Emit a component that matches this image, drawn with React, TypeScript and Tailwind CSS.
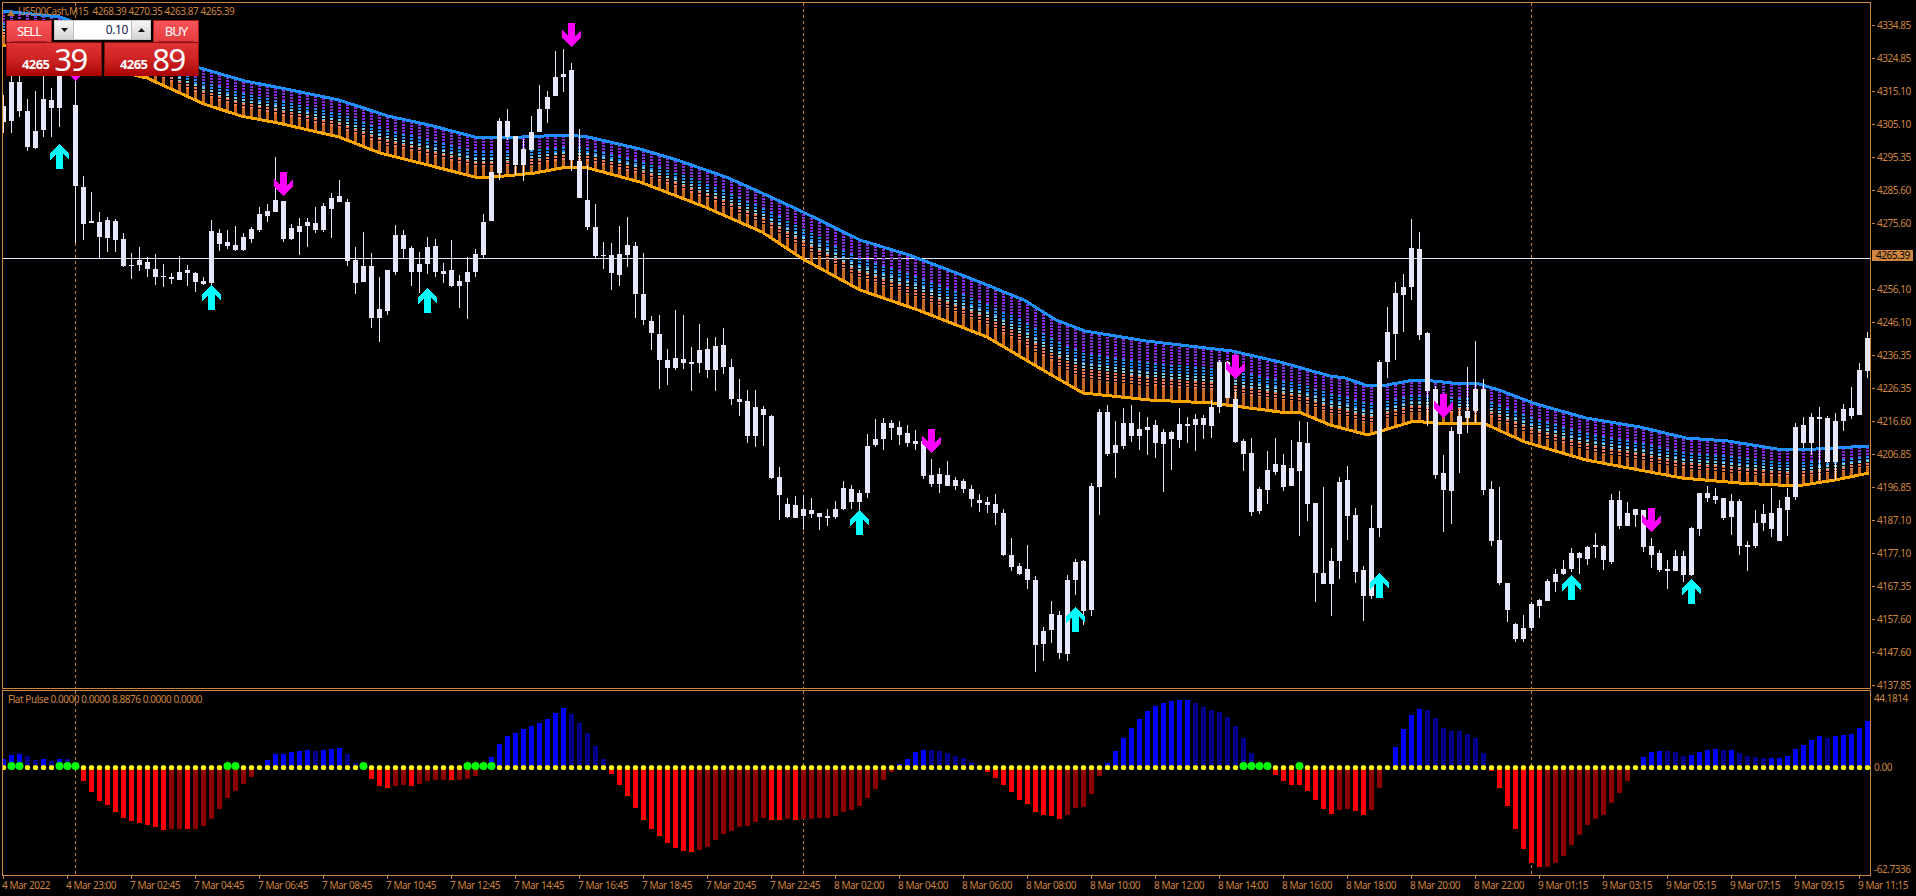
import React from 'react';

// hi, body top, body bottom, lo (page pixels)
const candles: number[][] = [
  [95,106,122,133],[60,82,121,133],[60,82,111,117],[99,111,147,151],[91,131,148,149],[60,99,130,137],[88,100,108,137],[50,60,108,127],[40,45,60,70],[76,105,186,243],
  [176,187,224,240],[192,221,223,223],[212,222,237,258],[217,220,238,252],[219,221,240,252],[233,239,266,267],[253,265,266,279],[247,260,265,271],[257,262,269,277],[254,269,277,285],
  [264,276,277,287],[273,277,279,284],[256,272,280,280],[265,270,273,286],[272,273,282,292],[277,281,284,285],[220,231,283,285],[229,233,244,251],[230,242,246,249],[226,245,250,251],
  [233,237,250,251],[227,229,239,243],[207,214,230,232],[204,211,216,222],[157,200,212,212],[201,201,239,242],[224,228,239,240],[218,226,232,255],[218,222,226,247],[207,223,230,233],
  [203,206,230,232],[193,198,209,238],[180,196,202,202],[199,202,261,266],[247,260,283,294],[232,266,282,282],[253,266,318,328],[277,309,318,342],[270,270,311,315],[225,235,272,275],
  [230,235,249,258],[246,248,272,286],[252,264,272,293],[237,247,264,274],[239,246,272,277],[263,271,274,283],[240,270,286,287],[275,281,286,308],[257,272,282,319],[249,254,272,277],
  [214,222,255,258],[172,172,221,221],[118,121,173,180],[109,121,137,140],[136,136,165,175],[139,149,165,181],[116,132,150,151],[85,109,132,132],[91,97,109,123],[51,77,96,96],
  [49,74,77,92],[63,70,160,171],[129,161,198,198],[165,200,227,230],[204,227,256,258],[242,255,256,269],[243,255,273,290],[226,254,275,286],[217,245,255,267],[242,246,294,318],
  [253,294,320,325],[316,321,333,350],[315,334,360,389],[349,360,368,385],[310,358,368,370],[315,359,363,369],[347,362,364,391],[324,350,363,373],[338,349,370,378],[337,346,370,391],
  [328,345,367,374],[359,367,399,405],[379,399,402,416],[390,401,436,443],[390,407,436,447],[406,409,415,446],[415,416,478,479],[467,477,495,520],[498,504,517,518],[496,505,518,518],
  [495,509,516,530],[498,510,514,518],[513,513,517,530],[509,516,518,526],[501,509,517,519],[481,488,509,510],[485,489,502,509],[490,493,502,510],[434,446,493,498],[419,439,445,447],
  [418,423,439,450],[420,423,428,440],[421,427,435,445],[425,433,443,447],[430,441,444,450],[440,441,476,479],[459,475,484,487],[468,474,484,493],[461,475,486,486],[477,480,486,490],
  [479,481,489,493],[485,489,499,507],[494,500,503,512],[497,502,505,513],[494,504,513,525],[509,513,555,556],[538,555,567,571],[563,566,574,575],[545,569,580,589],[576,580,645,672],
  [627,631,644,661],[601,614,630,643],[611,615,653,659],[575,580,654,661],[559,562,580,595],[560,561,611,625],[483,486,610,616],[409,412,487,515],[405,412,454,456],[421,445,453,478],
  [408,423,446,449],[405,423,436,442],[412,429,436,450],[417,427,430,455],[420,425,443,458],[429,432,444,492],[431,432,439,470],[408,424,440,448],[417,424,426,443],[414,419,425,451],
  [415,418,425,439],[400,407,426,438],[360,362,407,413],[361,362,398,398],[390,399,442,443],[439,441,454,471],[438,453,512,516],[487,489,511,514],[451,470,490,504],[438,464,472,475],
  [454,465,487,491],[440,468,486,486],[421,442,471,536],[422,443,504,521],[503,503,573,602],[487,573,584,584],[548,561,584,616],[477,482,561,579],[466,480,516,540],[508,515,572,583],
  [566,570,596,621],[505,528,596,599],[360,362,528,537],[307,332,362,378],[282,293,334,360],[274,287,295,332],[219,248,287,300],[232,249,335,340],[332,333,391,426],[386,389,475,479],
  [455,473,490,532],[427,431,491,524],[410,416,434,473],[367,411,418,433],[341,389,411,423],[379,389,490,495],[481,489,541,546],[487,540,583,585],[583,583,610,622],[623,624,639,642],
  [615,628,639,642],[602,604,628,631],[599,600,606,618],[579,581,601,601],[569,574,582,592],[560,569,574,575],[548,553,569,572],[552,553,558,574],[546,547,559,565],[533,545,547,558],
  [545,546,560,570],[494,500,562,564],[491,500,526,529],[502,513,526,526],[509,509,515,527],[510,510,547,552],[538,546,555,568],[550,553,570,572],[560,569,571,589],[550,556,571,571],
  [551,556,575,582],[527,528,575,576],[493,493,529,536],[486,493,498,502],[488,496,500,504],[498,498,518,520],[494,501,517,535],[499,501,546,555],[541,545,547,571],[510,523,546,548],
  [504,514,523,531],[488,513,529,537],[500,508,541,541],[488,497,510,536],[423,427,497,500],[417,425,443,448],[413,417,443,455],[407,417,419,480],[416,418,462,463],[413,421,462,480],
  [404,409,421,431],[387,408,416,419],[363,370,415,415],[332,338,371,378],
];

const bandTop: number[][] = [
  [3,11],[60,17],[200,68],[245,81],[286,89],[339,100],[388,116],[429,125],[475,137],[522,137],[567,135],[588,137],[640,149],[677,160],[726,177],[762,193],[803,212],[860,240],[909,255],[967,277],[1024,300],[1056,320],[1085,331],[1146,341],[1232,351],[1280,362],[1330,376],[1345,378],[1368,386],[1387,385],[1414,380],[1433,381],[1452,383],[1479,384],[1502,391],[1533,403],[1586,418],[1640,427],[1686,438],[1728,441],[1777,449],[1816,449],[1869,446],
];
const bandBottom: number[][] = [
  [3,45],[147,78],[204,104],[241,116],[278,123],[339,137],[380,153],[416,162],[475,177],[494,177],[535,173],[567,167],[588,168],[640,182],[705,207],[762,232],[803,259],[860,290],[918,310],[987,337],[1048,373],[1083,393],[1150,400],[1211,403],[1280,412],[1299,412],[1330,425],[1368,435],[1414,421],[1433,423],[1483,423],[1525,442],[1586,460],[1682,478],[1739,483],[1797,486],[1835,480],[1869,473],
];

const pulse = [
  8,12,13,11,7,8,6,8,8,0,-14,-25,-34,-38,-45,-51,-54,-56,-58,-60,
  -63,-62,-62,-62,-62,-59,-52,-42,-31,-24,-17,-10,0,7,13,13,15,16,17,16,
  17,18,19,13,4,0,-12,-19,-21,-19,-18,-19,-17,-14,-13,-13,-13,-13,-12,-9,
  0,10,23,31,34,38,41,44,48,54,59,53,44,34,21,8,-7,-18,-29,-41,
  -53,-62,-69,-76,-81,-84,-85,-83,-80,-73,-67,-64,-60,-59,-55,-51,-53,-53,-52,-53,
  -52,-52,-51,-51,-49,-45,-43,-39,-31,-22,-13,-5,3,8,15,17,17,16,14,11,
  9,5,0,-5,-11,-18,-25,-33,-37,-45,-48,-49,-52,-48,-41,-40,-27,-9,4,16,
  29,39,48,56,61,64,66,67,67,64,60,57,55,50,41,29,14,0,0,-8,
  -14,-18,-18,-24,-33,-42,-47,-43,-42,-44,-48,-43,-21,0,20,38,52,58,57,49,
  39,36,36,33,29,14,-4,-21,-39,-62,-82,-96,-100,-100,-96,-89,-78,-68,-58,-52,
  -48,-36,-26,-14,0,10,15,16,16,15,11,12,15,17,18,17,17,14,11,10,
  9,9,9,11,18,22,27,31,29,31,32,33,39,46,
];
// stretches drawn in the darker shade
const dimRanges = [[3,4],[6,6],[8,8],[21,22],[24,31],[39,39],[43,44],[49,50],[52,55],[57,59],[71,75],[87,95],[98,98],[100,111],[116,121],[133,137],[149,156],[167,168],[171,172],[178,185],[193,203],[208,210],[215,215],[217,220],[228,228]];
const greenDots = [1,2,7,8,9,28,29,45,58,59,60,61,155,156,157,158,162];

const prices = ['4334.85','4324.85','4315.10','4305.10','4295.35','4285.60','4275.60','','4256.10','4246.10','4236.35','4226.35','4216.60','4206.85','4196.85','4187.10','4177.10','4167.35','4157.60','4147.60','4137.85'];
const times = ['4 Mar 2022','4 Mar 23:00','7 Mar 02:45','7 Mar 04:45','7 Mar 06:45','7 Mar 08:45','7 Mar 10:45','7 Mar 12:45','7 Mar 14:45','7 Mar 16:45','7 Mar 18:45','7 Mar 20:45','7 Mar 22:45','8 Mar 02:00','8 Mar 04:00','8 Mar 06:00','8 Mar 08:00','8 Mar 10:00','8 Mar 12:00','8 Mar 14:00','8 Mar 16:00','8 Mar 18:00','8 Mar 20:00','8 Mar 22:00','9 Mar 01:15','9 Mar 03:15','9 Mar 05:15','9 Mar 07:15','9 Mar 09:15','9 Mar 11:15'];

const upArrows = [[59,144],[211,285],[427,288],[859,510],[1075,607],[1379,573],[1571,575],[1691,579]];
const downArrows = [[75,57],[571,23],[283,172],[931,429],[1235,355],[1443,394],[1651,508]];
const sessions = [75, 803, 1531];

const barX = (k: number) => 3 + 8 * k;
const lerp = (pts: number[][], x: number) => {
  for (let i = 1; i < pts.length; i++) {
    if (x <= pts[i][0]) {
      const [x0, y0] = pts[i - 1];
      const [x1, y1] = pts[i];
      return y0 + ((x - x0) / (x1 - x0)) * (y1 - y0);
    }
  }
  return pts[pts.length - 1][1];
};

const bandSegments = [
  { color: '#8a2be2', from: 0.03, to: 0.36, dash: '2 1' },
  { color: '#1e90ff', from: 0.36, to: 0.52, dash: '2 1' },
  { color: '#7fd0e8', from: 0.52, to: 0.62, dash: '2 1' },
  { color: '#ff7f50', from: 0.62, to: 0.76, dash: '2 1' },
  { color: '#c8691e', from: 0.76, to: 1, dash: undefined },
];

const columnPath = (from: number, to: number) =>
  candles
    .map((_, k) => {
      const x = barX(k) + 0.5;
      const t = lerp(bandTop, x);
      const b = lerp(bandBottom, x);
      return `M${x} ${Math.round(t + (b - t) * from)}V${Math.round(t + (b - t) * to)}`;
    })
    .join('');

const line = (pts: number[][]) => pts.map((p) => p.join(',')).join(' ');

const PriceChart = () => (
  <svg viewBox="3 3 1867 685" className="block w-full h-full" shapeRendering="crispEdges">
    {sessions.map((x) => (
      <line key={x} x1={x + 0.5} x2={x + 0.5} y1={3} y2={688} stroke="#cd853f" strokeDasharray="3 3" />
    ))}
    <rect x={3} y={258} width={1867} height={1} fill="#e6e6fa" />
    {bandSegments.map((s) => (
      <path key={s.color} d={columnPath(s.from, s.to)} stroke={s.color} strokeWidth={3} strokeDasharray={s.dash} fill="none" />
    ))}
    <polyline points={line(bandBottom)} fill="none" stroke="#ffa500" strokeWidth={3} />
    <polyline points={line(bandTop)} fill="none" stroke="#1e90ff" strokeWidth={3} />
    {candles.map(([hi, top, bot, lo], k) => (
      <g key={k} fill="#e6e6fa">
        <rect x={barX(k)} y={hi} width={1} height={lo - hi} />
        <rect x={barX(k) - 2} y={top} width={5} height={Math.max(bot - top, 1)} />
      </g>
    ))}
    {upArrows.map(([k, y]) => (
      <polygon
        key={k}
        fill="#00ffff"
        points={`${k + 0.5},${y} ${k + 10},${y + 10} ${k + 10},${y + 16} ${k + 4},${y + 10} ${k + 4},${y + 25} ${k - 3},${y + 25} ${k - 3},${y + 10} ${k - 9},${y + 16} ${k - 9},${y + 10}`}
      />
    ))}
    {downArrows.map(([k, y]) => (
      <polygon
        key={k}
        fill="#ff00ff"
        points={`${k + 0.5},${y + 24} ${k + 10},${y + 14} ${k + 10},${y + 7} ${k + 4},${y + 13} ${k + 4},${y} ${k - 3},${y} ${k - 3},${y + 13} ${k - 9},${y + 7} ${k - 9},${y + 14}`}
      />
    ))}
  </svg>
);

const PulseChart = () => (
  <svg viewBox="3 691 1867 184" className="block w-full h-full">
    {sessions.map((x) => (
      <line key={x} x1={x + 0.5} x2={x + 0.5} y1={691} y2={875} stroke="#cd853f" strokeDasharray="3 3" shapeRendering="crispEdges" />
    ))}
    {pulse.map((v, k) => {
      const dim = dimRanges.some(([a, b]) => k >= a && k <= b);
      const fill = v > 0 ? (dim ? '#00008b' : '#0000ff') : dim ? '#8b0000' : '#ff0000';
      return (
        <rect
          key={k}
          x={barX(k) - 2}
          y={v > 0 ? 767 - v : 767}
          width={5}
          height={Math.abs(v)}
          fill={fill}
          shapeRendering="crispEdges"
        />
      );
    })}
    {pulse.map((_, k) =>
      greenDots.includes(k) ? (
        <circle key={k} cx={barX(k) + 0.5} cy={766} r={4} fill="#00ff00" />
      ) : (
        <circle key={k} cx={barX(k) + 0.5} cy={767.5} r={2.6} fill="#ffff00" />
      )
    )}
  </svg>
);

const OrderButton = ({ label }: { label: string }) => (
  <div className="w-[46px] h-[22px] px-[4px] border-t border-x border-[#a81a1a] bg-gradient-to-b from-[#f9565a] to-[#e43a3f] text-center">
    <div className="h-[21px] border-b border-[#a82226] text-white text-[13px] leading-[21px] tracking-[-1px]">{label}</div>
  </div>
);

const Quote = ({ price, pips, w }: { price: string; pips: string; w: string }) => (
  <div className={`${w} h-[34px] pl-[15px] flex items-end border border-[#8c0f0f] border-b-0 bg-gradient-to-b from-[#dd3333] via-[#cc2222] to-[#aa0000] text-white`}>
    <span className="text-[13px] font-bold leading-[15px] mb-[4px] tracking-[-0.6px]">{price}</span>
    <span className="ml-[5px] text-[31px] leading-[34px] tracking-[-1.5px]">{pips}</span>
  </div>
);

const TradePanel = () => (
  <div className="absolute left-[3px] top-[17px] w-[193px] flex flex-col bg-black">
    <div className="flex h-[22px] justify-between">
      <OrderButton label="SELL" />
      <div className="w-[97px] h-[20px] flex border border-[#c8c8c8] bg-white">
        <div className="w-[19px] flex items-center justify-center bg-gradient-to-b from-[#f6f6f6] to-[#d4d4d4] border-r border-[#bdbdbd]">
          <svg width="7" height="4" viewBox="0 0 7 4"><polygon points="0,0 7,0 3.5,4" fill="#111" /></svg>
        </div>
        <div className="flex-1 pr-[3px] text-right text-[12px] leading-[18px] tracking-[-0.4px] text-[#10204a]">0.10</div>
        <div className="w-[19px] flex items-center justify-center bg-gradient-to-b from-[#f6f6f6] to-[#d4d4d4] border-l border-[#bdbdbd]">
          <svg width="7" height="4" viewBox="0 0 7 4"><polygon points="0,4 7,4 3.5,0" fill="#111" /></svg>
        </div>
      </div>
      <OrderButton label="BUY" />
    </div>
    <div className="flex justify-between">
      <Quote w="w-[96px]" price="4265" pips="39" />
      <Quote w="w-[95px]" price="4265" pips="89" />
    </div>
  </div>
);

const PriceAxis = () => (
  <div className="pt-[7px] flex flex-col text-[10px] tracking-[-0.47px] text-[#cd853f]">
    {prices.map((p, i) => (
      <div key={i} className="relative h-[33px] shrink-0 flex items-center gap-[2px]">
        <div className="ml-px w-[3px] h-px bg-[#cd853f]" />
        <span>{p}</span>
        {p === '' && (
          <span className="absolute left-px top-[10px] w-[41px] h-[11px] leading-[11px] pl-[4px] bg-[#cd853f] text-black">4265.39</span>
        )}
      </div>
    ))}
  </div>
);

const PulseAxis = () => (
  <div className="pl-[3px] flex flex-col text-[10px] leading-[12px] tracking-[-0.47px] text-[#cd853f]">
    <span className="mt-[2px]">44.1814</span>
    <span className="mt-[57px]">0.00</span>
    <span className="mt-[90px]">-62.7336</span>
  </div>
);

const TimeAxis = () => (
  <div className="flex pl-px text-[10px] tracking-[-0.47px] text-[#cd853f]">
    {times.map((t) => (
      <div key={t} className="w-16 shrink-0">
        <div className="w-px h-[3px] bg-[#cd853f]" />
        <div className="-ml-px leading-[12px] whitespace-nowrap">{t}</div>
      </div>
    ))}
  </div>
);

export default function App() {
  return (
    <div className="w-[1916px] h-[896px] pt-[2px] pl-[2px] flex flex-col overflow-hidden bg-black font-['Noto_Sans',Arial,sans-serif]">
      <div className="flex h-[687px]">
        <div className="relative w-[1869px] border border-[#cd853f]">
          <PriceChart />
          <div className="absolute left-[4px] top-[7px] w-0 h-0 border-x-[4px] border-x-transparent border-b-[6px] border-b-[#b5793c]" />
          <div className="absolute left-[15px] top-[2px] text-[10px] leading-[12px] tracking-[-0.45px] text-[#cd853f] whitespace-pre">US500Cash,M15  4268.39 4270.35 4263.87 4265.39</div>
          <TradePanel />
        </div>
        <PriceAxis />
      </div>
      <div className="flex h-[186px] mt-px">
        <div className="relative w-[1869px] border border-[#cd853f]">
          <PulseChart />
          <div className="absolute left-[5px] top-[2px] text-[10px] leading-[12px] tracking-[-0.45px] text-[#cd853f]">Flat Pulse 0.0000 0.0000 8.8876 0.0000 0.0000</div>
        </div>
        <PulseAxis />
      </div>
      <TimeAxis />
    </div>
  );
}
